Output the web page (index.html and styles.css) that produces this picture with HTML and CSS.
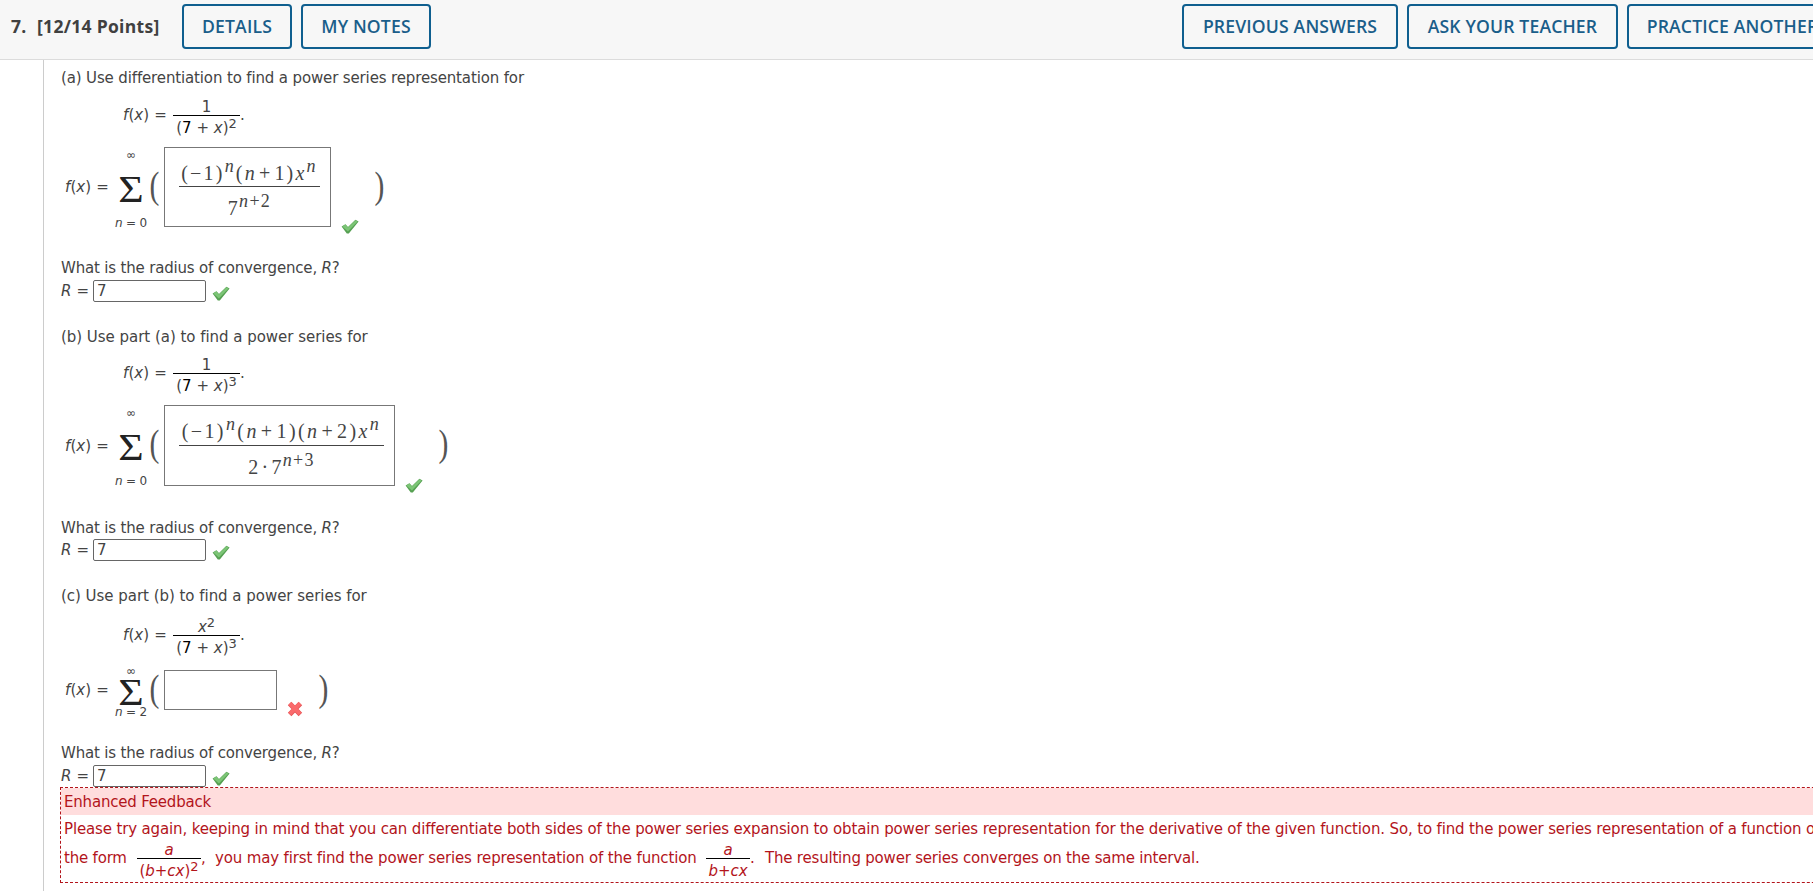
FILE: index.html
```html
<!DOCTYPE html>
<html lang="en">
<head>
    <meta charset="UTF-8">
    <meta name="viewport" content="width=device-width, initial-scale=1.0">
    <title>Power Series</title>
    <link rel="stylesheet" href="styles.css">
</head>
<body>

<!-- Answer marks -->
<svg class="sprites" width="0" height="0">
    <symbol id="check" viewBox="0 0 18 15">
        <path d="M.6 7.6 L4.4 5.2 L7 8 L14.4 .8 L17.6 2.4 L7.8 14.4 L5.8 14.4 Z" fill="#56a052"/>
        <path d="M1.3 7.4 L4.4 5.4 L7 8.6 L14.5 1.2 L16.6 2.4 L6.9 12.4 Z" fill="#7cc576"/>
    </symbol>
    <symbol id="cross" viewBox="0 0 16 16">
        <path d="M2.6 2.6 L13.4 13.4 M13.4 2.6 L2.6 13.4" stroke="#e65557" stroke-width="5"/>
        <path d="M2.8 2.4 L13 12.8 M13 2.4 L2.8 12.8" stroke="#fa6a6c" stroke-width="3.8"/>
    </symbol>
</svg>

<header>
    <h1><span class="num">7.</span> <span class="points">[12/14 Points]</span></h1>
    <button class="details">DETAILS</button>
    <button class="notes">MY NOTES</button>
    <div class="right">
        <button class="previous">PREVIOUS ANSWERS</button>
        <button class="ask">ASK YOUR TEACHER</button>
        <button class="practice">PRACTICE ANOTHER</button>
    </div>
</header>

<main>
    <!-- Part (a) -->
    <section class="part part-a">
        <p class="ask-text">(a) Use differentiation to find a power series representation for</p>
        <div class="formula">
            <span class="fx"><i>f</i>(<i>x</i>) =</span>
            <span class="frac"><span class="top">1</span><span class="bottom">(<b>7</b> + <i>x</i>)<sup>2</sup></span></span><span class="dot">.</span>
        </div>
        <div class="sum">
            <span class="fx"><i>f</i>(<i>x</i>) =</span>
            <span class="sigma"><small>∞</small><span>Σ</span><small><i>n</i> = 0</small></span>
            <span class="paren">(</span>
            <div class="answer wide-a">
                <div class="math">
                    <span class="top">(−1)<sup><i>n</i></sup>(<i>n</i><u>+</u>1)<i>x</i><sup><i>n</i></sup></span>
                    <span class="bottom">7<sup><i>n</i>+2</sup></span>
                </div>
            </div>
            <svg class="mark"><use href="#check"/></svg>
            <span class="paren close">)</span>
        </div>
        <p class="radius">What is the radius of convergence, <i>R</i>?</p>
        <div class="result"><label><i>R</i> =</label><input type="text" value="7"><svg class="mark"><use href="#check"/></svg></div>
    </section>

    <!-- Part (b) -->
    <section class="part part-b">
        <p class="ask-text">(b) Use part (a) to find a power series for</p>
        <div class="formula">
            <span class="fx"><i>f</i>(<i>x</i>) =</span>
            <span class="frac"><span class="top">1</span><span class="bottom">(<b>7</b> + <i>x</i>)<sup>3</sup></span></span><span class="dot">.</span>
        </div>
        <div class="sum">
            <span class="fx"><i>f</i>(<i>x</i>) =</span>
            <span class="sigma"><small>∞</small><span>Σ</span><small><i>n</i> = 0</small></span>
            <span class="paren">(</span>
            <div class="answer wide-b">
                <div class="math">
                    <span class="top">(−1)<sup><i>n</i></sup>(<i>n</i><u>+</u>1)(<i>n</i><u>+</u>2)<i>x</i><sup><i>n</i></sup></span>
                    <span class="bottom">2<u>·</u>7<sup><i>n</i>+3</sup></span>
                </div>
            </div>
            <svg class="mark"><use href="#check"/></svg>
            <span class="paren close">)</span>
        </div>
        <p class="radius">What is the radius of convergence, <i>R</i>?</p>
        <div class="result"><label><i>R</i> =</label><input type="text" value="7"><svg class="mark"><use href="#check"/></svg></div>
    </section>

    <!-- Part (c) -->
    <section class="part part-c">
        <p class="ask-text">(c) Use part (b) to find a power series for</p>
        <div class="formula">
            <span class="fx"><i>f</i>(<i>x</i>) =</span>
            <span class="frac"><span class="top"><i>x</i><sup>2</sup></span><span class="bottom">(<b>7</b> + <i>x</i>)<sup>3</sup></span></span><span class="dot">.</span>
        </div>
        <div class="sum">
            <span class="fx"><i>f</i>(<i>x</i>) =</span>
            <span class="sigma"><small>∞</small><span>Σ</span><small><i>n</i> = 2</small></span>
            <span class="paren">(</span>
            <div class="answer empty"></div>
            <svg class="mark wrong"><use href="#cross"/></svg>
            <span class="paren close">)</span>
        </div>
        <p class="radius">What is the radius of convergence, <i>R</i>?</p>
        <div class="result"><label><i>R</i> =</label><input type="text" value="7"><svg class="mark"><use href="#check"/></svg></div>
    </section>

    <!-- Feedback -->
    <div class="feedback">
        <h2>Enhanced Feedback</h2>
        <p>Please try again, keeping in mind that you can differentiate both sides of the power series expansion to obtain power series representation for the derivative of the given function. So, to find the power series representation of a function of</p>
        <div class="form-line">
            <span class="text-1">the form</span>
            <span class="frac frac-1"><span class="top"><i>a</i></span><span class="bottom">(<i>b</i>+<i>cx</i>)<sup>2</sup></span></span>
            <span class="text-2">,</span>
            <span class="text-3">you may first find the power series representation of the function</span>
            <span class="frac frac-2"><span class="top"><i>a</i></span><span class="bottom"><i>b</i>+<i>cx</i></span></span>
            <span class="text-4">.</span>
            <span>The resulting power series converges on the same interval.</span>
        </div>
    </div>
</main>

</body>
</html>
```
FILE: styles.css
```css
* {
    box-sizing: border-box;
}

body {
    margin: 0;
    height: 891px;
    overflow: hidden;
    background: #fff;
    color: #444;
    font-family: Verdana, "DejaVu Sans", sans-serif;
    font-size: 15px;
    letter-spacing: -0.14px;
}

p, h1, h2 {
    margin: 0;
    font-weight: normal;
    white-space: nowrap;
}

.sprites {
    position: absolute;
}

/* Header */
header {
    display: flex;
    height: 60px;
    padding: 4px 0 0 11px;
    background: #f7f7f7;
    border-bottom: 1px solid #dcdcdc;
    font-family: "Open Sans", sans-serif;
}

h1 {
    display: flex;
    flex: none;
    width: 171px;
    height: 44px;
    line-height: 45px;
    font-size: 17.5px;
    font-weight: bold;
    letter-spacing: 0.3px;
    color: #404040;
}

.num {
    width: 26px;
}

button {
    flex: none;
    height: 45px;
    padding: 0 0 2px;
    background: transparent;
    border: 2px solid #0f5f8f;
    border-radius: 4px;
    color: #1a5e8a;
    font-family: "Open Sans", sans-serif;
    font-size: 17.6px;
    font-weight: 600;
    letter-spacing: 0.15px;
    white-space: nowrap;
}

.details {
    width: 110px;
    margin-right: 9px;
}

.notes {
    width: 130px;
}

.right {
    display: flex;
    flex: none;
    gap: 9px;
    margin-left: 751px;
}

.previous {
    width: 216px;
}

.ask {
    width: 211px;
}

.practice {
    width: 211px;
}

/* Question body */
main {
    height: 831px;
    margin-left: 43px;
    padding: 7px 0 0 16px;
    border-left: 1px solid #ccc;
}

.part > p {
    height: 22px;
    line-height: 22px;
    padding-left: 1px;
}

.part-b,
.part-c {
    margin-top: 24px;
}

.part-b .ask-text,
.part-c .ask-text {
    letter-spacing: -0.03px;
}

.formula {
    display: flex;
    align-items: center;
    height: 40px;
    margin-top: 6px;
    padding-left: 63px;
}

.part-b .formula {
    margin-top: 5px;
}

.part-c .formula {
    margin-top: 8px;
}

.fx {
    width: 50px;
    letter-spacing: 0.1px;
    white-space: nowrap;
}

.frac {
    display: flex;
    flex: none;
    flex-direction: column;
    width: 67px;
    text-align: center;
    letter-spacing: 0;
    white-space: nowrap;
}

.frac .top,
.frac .bottom {
    height: 20px;
    line-height: 19px;
}

.frac .top {
    line-height: 24px;
}

.frac .bottom {
    padding-top: 3px;
    border-top: 1px solid #000;
}

.frac b {
    color: #000;
    font-weight: normal;
}

sup {
    font-size: 13px;
    line-height: 0;
    vertical-align: 5px;
}

/* Sum rows */
.sum {
    display: flex;
    align-items: center;
    height: 80px;
    margin-top: 12px;
    padding-left: 5px;
}

.sum .fx {
    width: 49px;
}

.part-b .sum {
    height: 81px;
}

.part-c .sum {
    height: 40px;
    margin-top: 15px;
}

.sigma {
    display: flex;
    flex-direction: column;
    align-items: center;
    justify-content: space-between;
    width: 34px;
    height: 80px;
    margin-top: 3px;
    font-family: "Liberation Serif", serif;
    font-size: 38px;
    line-height: 26px;
    color: #222;
}

.sigma > span {
    transform: scaleX(1.15);
}

.sigma small {
    font-family: Verdana, "DejaVu Sans", sans-serif;
    font-size: 12px;
    line-height: 12px;
    white-space: nowrap;
    color: #444;
}

.part-c .sigma {
    height: 53px;
    margin-top: 3px;
}

.paren {
    width: 15px;
    margin: -4px 1px 0 0;
    font-family: "Liberation Serif", serif;
    font-size: 37px;
    line-height: 37px;
    color: #555;
    transform: scaleX(0.8);
}

.answer {
    display: flex;
    flex: none;
    height: 100%;
    padding: 12px 0 0 14px;
    border: 1px solid #777;
}

.wide-a {
    width: 167px;
}

.wide-b {
    width: 231px;
}

.empty {
    width: 113px;
}

.mark {
    flex: none;
    align-self: flex-end;
    width: 18px;
    height: 15px;
    margin: 0 14px -7px 10px;
}

.wrong {
    width: 16px;
    height: 16px;
}

.math {
    display: flex;
    flex-direction: column;
    width: 141px;
    font-family: "Liberation Serif", serif;
    font-size: 20px;
    text-align: center;
    white-space: nowrap;
}

.wide-b .math {
    width: 205px;
}

.math .top,
.math .bottom {
    height: 26px;
    line-height: 26px;
    letter-spacing: 2.2px;
}

.wide-b .top {
    height: 27px;
    letter-spacing: 2.4px;
}

.math .bottom {
    padding-top: 8px;
    border-top: 1px solid #444;
    letter-spacing: 1.3px;
}

.math u {
    margin: 0 2px;
    text-decoration: none;
}

.math sup {
    font-size: 18px;
    vertical-align: 8px;
}

.radius {
    margin-top: 30px;
    letter-spacing: -0.18px;
}

.part-b .radius {
    margin-top: 31px;
}

.part-c .radius {
    margin-top: 32px;
}

.result {
    display: flex;
    align-items: center;
    height: 22px;
    margin-top: 1px;
    padding-left: 1px;
}

.part-b .result {
    margin-top: 0;
}

.result label {
    width: 32px;
    letter-spacing: 0.1px;
}

.result input {
    width: 113px;
    height: 22px;
    padding: 0 3px;
    border: 1px solid #666;
    border-radius: 2px;
    color: #444;
    font-family: inherit;
    font-size: 15px;
}

.result .mark {
    margin: 0 0 1px 6px;
}

/* Feedback box */
.feedback {
    width: 1900px;
    height: 96px;
    border: 1px dashed #b3141b;
    color: #b3141b;
    letter-spacing: -0.2px;
}

.feedback h2 {
    height: 27px;
    padding-left: 3px;
    background: #fdd;
    font-size: 15px;
    line-height: 28px;
}

.feedback p {
    height: 26px;
    padding-left: 3px;
    line-height: 28px;
    letter-spacing: -0.145px;
}

.form-line {
    display: flex;
    align-items: center;
    height: 33px;
    padding-left: 3px;
    white-space: nowrap;
}

.form-line span {
    flex: none;
}

.frac-1 {
    width: 64px;
}

.frac-2 {
    width: 44px;
    padding-top: 1px;
}

.text-1 {
    width: 73px;
}

.text-2 {
    width: 14px;
}

.text-3 {
    width: 491px;
    letter-spacing: -0.15px;
}

.text-4 {
    width: 15px;
}
```
